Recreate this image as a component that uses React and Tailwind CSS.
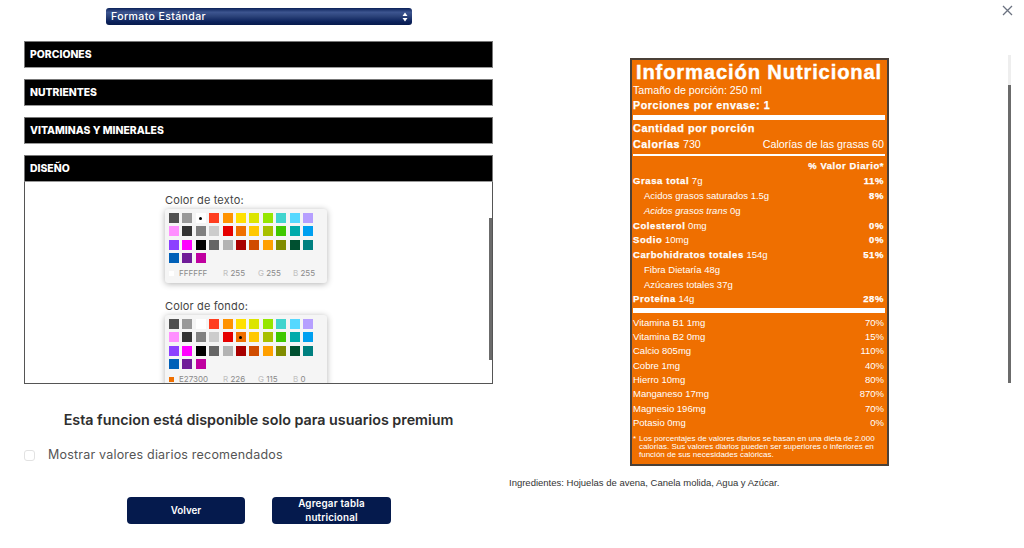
import React from "react";

const COLORS = [
  "#505050","#999999","#ffffff","#ff3d1f","#ff9200","#ffe000","#dce500","#95e600","#40d4ce","#55d8ff","#b69fff",
  "#ff90ff","#333333","#808080","#cccccc","#e60000","#ef6f00","#ffc800","#a8c000","#40c800","#00aaaa","#00a0f0",
  "#8c40ff","#ff00ff","#000000","#666666","#b3b3b3","#a80000","#d04c00","#ffa000","#808c00","#005030","#008080",
  "#0060b8","#701c98","#c000a0",
];

function Picker({ selected, hex, r, g, b, dot }) {
  return (
    <div className="w-[162px] h-[74px] shrink-0 rounded-[3px] bg-[#f5f5f5] shadow-[0_1px_6px_rgba(0,0,0,0.3)] pl-[4px] pt-[4px]">
      <div className="grid grid-cols-[repeat(11,10px)] gap-[3.4px]">
        {COLORS.map((c, i) => (
          <div key={i} className="w-[10px] h-[10px] flex items-center justify-center" style={{ backgroundColor: c }}>
            {i === selected && <div className="w-[3px] h-[3px] rounded-full bg-black" />}
          </div>
        ))}
      </div>
      <div className="flex items-center h-[10px] mt-[5px] text-[8px] text-[#8a8a8a]">
        <div className="w-[5px] h-[5px]" style={{ backgroundColor: dot }} />
        <span className="ml-[5px] w-[44px]">{hex}</span>
        <span className="w-[35px]"><span className="text-[#c0c0c0]">R</span> {r}</span>
        <span className="w-[35px]"><span className="text-[#c0c0c0]">G</span> {g}</span>
        <span><span className="text-[#c0c0c0]">B</span> {b}</span>
      </div>
    </div>
  );
}

function Header({ children, cls = "" }) {
  return (
    <div className={`h-[27px] bg-black border border-[#777] border-b-[#999] flex items-center pl-[5px] text-white text-[10.4px] font-extrabold ${cls}`}>
      {children}
    </div>
  );
}

const B = ({ children }) => (
  <b className="font-bold tracking-[0.6px] [-webkit-text-stroke:0.25px_white]">{children}</b>
);

function Row({ left, right, sub }) {
  return (
    <div className={`flex justify-between items-center h-[14.75px] ${sub ? "pl-[11px]" : ""}`}>
      <span>{left}</span>
      <B>{right}</B>
    </div>
  );
}

const VITS = [
  ["Vitamina B1 1mg", "70%"],["Vitamina B2 0mg", "15%"],["Calcio 805mg", "110%"],["Cobre 1mg", "40%"],
  ["Hierro 10mg", "80%"],["Manganeso 17mg", "870%"],["Magnesio 196mg", "70%"],["Potasio 0mg", "0%"],
];

export default function App() {
  return (
    <div className="relative w-[1024px] h-[548px] bg-white overflow-hidden flex font-['Inter',sans-serif]">
      <div className="w-[505px] shrink-0 pt-[8px] pl-[24px] pr-[12px]">
        <div className="ml-[82px] w-[306px] h-[17px] rounded-[3px] bg-[linear-gradient(#0a2058,#3d5590_25%,#2a4178_50%,#0c225c_80%,#071a4c)] flex items-center justify-between pl-[5px] pr-[4px] text-white text-[10.5px] font-medium tracking-[0.4px]">
          <span>Formato Estándar</span>
          <svg width="6" height="10" viewBox="0 0 6 10"><path d="M3 0.5 5.5 4H0.5ZM3 9.5 0.5 6H5.5Z" fill="#fff" /></svg>
        </div>
        <div className="mt-[16px] flex flex-col gap-[11px]">
          <Header>PORCIONES</Header>
          <Header>NUTRIENTES</Header>
          <Header>VITAMINAS Y MINERALES</Header>
          <div>
            <Header cls="h-[26px]">DISEÑO</Header>
            <div className="relative h-[202px] border border-t-0 border-[#555] overflow-hidden">
              <div className="flex flex-col pl-[140px] pt-[11px]">
                <div className="text-[11px] leading-[14px] text-[#444] tracking-[0.15px] mb-[2px]">Color de texto:</div>
                <Picker selected={2} hex="FFFFFF" r="255" g="255" b="255" dot="#ffffff" />
                <div className="text-[11px] leading-[14px] text-[#444] tracking-[0.15px] mt-[16px] mb-[2px]">Color de fondo:</div>
                <Picker selected={16} hex="E27300" r="226" g="115" b="0" dot="#ef6f00" />
              </div>
              <div className="absolute left-[464px] top-[36px] w-[3px] h-[142px] bg-[#6b6b6b]" />
            </div>
          </div>
        </div>
        <div className="mt-[27px] text-center text-[14.3px] leading-[18px] font-semibold text-[#2e2e2e] w-[469px] whitespace-nowrap">
          Esta funcion está disponible solo para usuarios premium
        </div>
        <div className="mt-[16px] flex items-center h-[20px]">
          <div className="w-[11px] h-[11px] rounded-[3px] border border-[#e2e2e2] bg-white" />
          <span className="ml-[13px] text-[12.5px] text-[#555] tracking-[0.2px]">Mostrar valores diarios recomendados</span>
        </div>
        <div className="mt-[32px] ml-[103px] flex gap-[27px]">
          <button className="w-[118px] h-[27px] rounded-[4px] bg-[#051a4d] text-white text-[9.8px] font-semibold leading-[13px]">Volver</button>
          <button className="w-[119px] h-[27px] rounded-[4px] bg-[#051a4d] text-white text-[9.8px] font-semibold leading-[13.5px] px-[20px] tracking-[0.2px]">Agregar tabla nutricional</button>
        </div>
      </div>

      <div className="flex-1 pt-[58px]">
        <div className="ml-[125px] w-[259px] h-[408px] border-2 border-[#4a4038] bg-[#ef6f00] pl-[1px] pr-[3px] text-white text-[9.5px] font-['Liberation_Sans',sans-serif] overflow-hidden">
          <div className="h-[24px] leading-[24px] text-[20.2px] font-bold text-center tracking-[0.85px] whitespace-nowrap [-webkit-text-stroke:0.4px_white] pl-[1px]">Información Nutricional</div>
          <div className="h-[14px] leading-[13px] text-[10.7px]">Tamaño de porción: 250 ml</div>
          <div className="h-[16px] leading-[14px] text-[10.7px]"><B>Porciones por envase: 1</B></div>
          <div className="h-[5px] bg-white mt-[1px] -mr-[1px]" />
          <div className="h-[16px] leading-[16px] text-[10.9px]"><B>Cantidad por porción</B></div>
          <div className="h-[18px] pb-[1px] flex justify-between items-center text-[10.7px]">
            <span><B>Calorías</B> 730</span>
            <span>Calorías de las grasas 60</span>
          </div>
          <div className="h-[2px] bg-white -mr-[1px]" />
          <div className="h-[18px] pt-[2px] flex items-center justify-end text-[9.4px]"><B>% Valor Diario*</B></div>
          <div>
            <Row left={<><B>Grasa total</B> 7g</>} right="11%" />
            <Row sub left="Acidos grasos saturados 1.5g" right="8%" />
            <Row sub left={<><i>Acidos grasos trans</i> 0g</>} />
            <Row left={<><B>Colesterol</B> 0mg</>} right="0%" />
            <Row left={<><B>Sodio</B> 10mg</>} right="0%" />
            <Row left={<><B>Carbohidratos totales</B> 154g</>} right="51%" />
            <Row sub left="Fibra Dietaría 48g" />
            <Row sub left="Azúcares totales 37g" />
            <Row left={<><B>Proteína</B> 14g</>} right="28%" />
          </div>
          <div className="h-[5px] bg-white mt-[1px] -mr-[1px]" />
          <div className="mt-[3px]">
            {VITS.map(([a, b]) => (
              <div key={a} className="flex justify-between items-center h-[14.3px]"><span>{a}</span><span>{b}</span></div>
            ))}
          </div>
          <div className="mt-[5px] flex text-[8px] leading-[8px]">
            <span className="w-[6px] shrink-0">*</span>
            <span className="w-[240px] shrink-0">Los porcentajes de valores diarios se basan en una dieta de 2.000 calorías. Sus valores diarios pueden ser superiores o inferiores en función de sus necesidades calóricas.</span>
          </div>
        </div>
        <div className="mt-[11px] ml-[4px] text-[9.5px] leading-[12px] text-[#333] font-['Liberation_Sans',sans-serif]">
          Ingredientes: Hojuelas de avena, Canela molida, Agua y Azúcar.
        </div>
      </div>

      <svg className="absolute left-[1002px] top-[5px]" width="11" height="11" viewBox="0 0 11 11">
        <path d="M1 1 10 10M10 1 1 10" stroke="#6b7280" strokeWidth="1.3" />
      </svg>
      <div className="absolute left-[1008px] top-[55px] w-[3px] h-[30px] bg-[#eeeeee]" />
      <div className="absolute left-[1008px] top-[85px] w-[3px] h-[298px] bg-[#6b6b6b]" />
    </div>
  );
}
